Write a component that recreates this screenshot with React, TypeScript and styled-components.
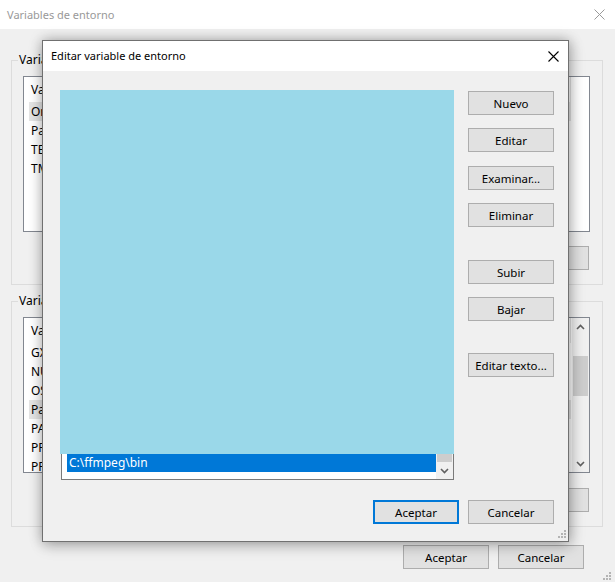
import React from "react";
import styled, { createGlobalStyle } from "styled-components";

const GlobalStyle = createGlobalStyle`
  html, body { margin: 0; padding: 0; }
  body {
    width: 615px;
    height: 582px;
    overflow: hidden;
    background: #f0f0f0;
    font-family: "Noto Sans", "Open Sans", sans-serif;
    font-size: 11.5px;
    color: #000;
  }
  * { box-sizing: border-box; }
`;

const Desktop = styled.div`
  position: relative;
  width: 615px;
  height: 582px;
  overflow: hidden;
`;

const Window = styled.div`
  position: relative;
  display: flex;
  flex-direction: column;
  width: 615px;
  height: 582px;
  background: #f0f0f0;
`;

const TitleBar = styled.div<{ $active?: boolean }>`
  display: flex;
  align-items: center;
  justify-content: space-between;
  flex-shrink: 0;
  height: ${(p) => (p.$active ? 30 : 29)}px;
  background: #fff;
  padding: 0 ${(p) => (p.$active ? 9 : 10)}px 0 ${(p) => (p.$active ? 8 : 7)}px;
  color: ${(p) => (p.$active ? "#000" : "#999")};
  font-size: 11px;
  line-height: 16px;
`;

const WindowBody = styled.div`
  flex: 1;
  display: flex;
  flex-direction: column;
  padding: 23px 12px 0 11px;
`;

const GroupBox = styled.fieldset<{ $mt?: number }>`
  margin: ${(p) => p.$mt ?? 0}px 0 0;
  padding: 8px 12px 14px 11px;
  border: 1px solid #dcdcdc;
  min-width: 0;
`;

const GroupLegend = styled.legend`
  padding: 0 1px;
  margin-left: -5px;
  line-height: 16px;
  font-size: 12px;
`;

const ListView = styled.div`
  display: flex;
  height: 156px;
  background: #fff;
  border: 1px solid #828790;
  overflow: hidden;
`;

const ListMain = styled.div<{ $mr: number }>`
  flex: 1;
  min-width: 0;
  display: flex;
  flex-direction: column;
  padding: 0 ${(p) => p.$mr}px 0 5px;
`;

const ListHeader = styled.div`
  display: flex;
  height: 25px;
  flex-shrink: 0;
`;

const HeaderCell = styled.div<{ $w?: number }>`
  display: flex;
  align-items: center;
  padding-left: 2px;
  ${(p) => (p.$w ? `width: ${p.$w}px;` : "flex: 1;")}
  border-right: 1px solid #e5e5e5;
  white-space: nowrap;
  font-size: 12px;
`;

const ListRow = styled.div<{ $selected?: boolean }>`
  height: 19px;
  line-height: 19px;
  padding-left: 2px;
  white-space: nowrap;
  font-size: 12px;
  background: ${(p) => (p.$selected ? "#e5e5e5" : "transparent")};
  flex-shrink: 0;
`;

const VScroll = styled.div`
  width: 17px;
  flex-shrink: 0;
  display: flex;
  flex-direction: column;
  background: #f0f0f0;
`;

const ScrollArrow = styled.div`
  height: 17px;
  flex-shrink: 0;
  display: flex;
  align-items: center;
  justify-content: center;
`;

const ScrollTrack = styled.div<{ $end?: boolean }>`
  flex: 1;
  display: flex;
  flex-direction: column;
  justify-content: ${(p) => (p.$end ? "flex-end" : "flex-start")};
  padding: 0 1px;
`;

const ScrollThumb = styled.div<{ $mt: number; $h: number }>`
  margin-top: ${(p) => p.$mt}px;
  height: ${(p) => p.$h}px;
  flex-shrink: 0;
  background: #cdcdcd;
`;

const ButtonRow = styled.div<{ $mt: number; $pr?: number }>`
  display: flex;
  justify-content: flex-end;
  gap: 9px;
  margin-top: ${(p) => p.$mt}px;
  padding-right: ${(p) => p.$pr ?? 0}px;
`;

const Button = styled.button<{ $default?: boolean; $mt?: number }>`
  width: 86px;
  height: 24px;
  flex-shrink: 0;
  margin: ${(p) => p.$mt ?? 0}px 0 0;
  padding: 0;
  background: #e1e1e1;
  border: ${(p) => (p.$default ? "2px solid #0078d7" : "1px solid #adadad")};
  font-family: inherit;
  font-size: 11.5px;
  color: #000;
  white-space: nowrap;
`;

const Grip = styled.svg<{ $right: number; $bottom: number }>`
  position: absolute;
  right: ${(p) => p.$right}px;
  bottom: ${(p) => p.$bottom}px;
  width: 8px;
  height: 8px;
`;

const Dialog = styled.div`
  position: absolute;
  left: 42px;
  top: 40px;
  width: 527px;
  height: 502px;
  display: flex;
  flex-direction: column;
  background: #f0f0f0;
  border: 1px solid #707070;
  box-shadow: 0 0 12px rgba(0, 0, 0, 0.28), 2px 4px 14px rgba(0, 0, 0, 0.18);
`;

const DialogBody = styled.div`
  flex: 1;
  display: flex;
  flex-direction: column;
  padding: 19px 14px 0 18px;
`;

const DialogMain = styled.div`
  display: flex;
  align-items: flex-start;
  gap: 14px;
`;

const PathListWrap = styled.div`
  position: relative;
`;

const PathList = styled.div`
  display: flex;
  width: 393px;
  height: 390px;
  background: #fff;
  border: 1px solid #7a7a7a;
`;

const PathItems = styled.div`
  flex: 1;
  min-width: 0;
  display: flex;
  flex-direction: column;
  justify-content: flex-end;
  padding: 0 0 7px 5px;
`;

const PathItem = styled.div<{ $selected?: boolean }>`
  height: 18px;
  line-height: 18px;
  padding-left: 2px;
  font-size: 12px;
  white-space: nowrap;
  background: ${(p) => (p.$selected ? "#0078d7" : "transparent")};
  color: ${(p) => (p.$selected ? "#fff" : "#000")};
`;

const Redaction = styled.div`
  position: absolute;
  left: -1px;
  top: 0;
  width: 394px;
  height: 364px;
  background: #9ad8e9;
`;

const SideButtons = styled.div`
  display: flex;
  flex-direction: column;
  padding-top: 1px;
`;

const CloseIcon = ({ color, width }: { color: string; width: number }) => (
  <svg width="11" height="11" viewBox="0 0 11 11">
    <path d="M0.5 0.5 L10.5 10.5 M10.5 0.5 L0.5 10.5" stroke={color} strokeWidth={width} fill="none" />
  </svg>
);

const Chevron = ({ up }: { up?: boolean }) => (
  <svg width="9" height="6" viewBox="0 0 9 6">
    <path
      d={up ? "M1 5 L4.5 1.5 L8 5" : "M1 1 L4.5 4.5 L8 1"}
      stroke="#606060"
      strokeWidth="1.6"
      fill="none"
    />
  </svg>
);

const GripDots = ({ right, bottom }: { right: number; bottom: number }) => (
  <Grip $right={right} $bottom={bottom} viewBox="0 0 8 8">
    {[
      [6, 0],
      [3, 3],
      [6, 3],
      [0, 6],
      [3, 6],
      [6, 6],
    ].map(([x, y]) => (
      <rect key={`${x}-${y}`} x={x} y={y} width="2" height="2" fill="#b4b4b4" />
    ))}
  </Grip>
);

const userVars = ["OneDrive", "Path", "TEMP", "TMP"];
const systemVars = [
  "GXDLLPATH",
  "NUMBER_OF_PROCESSORS",
  "OS",
  "Path",
  "PATHEXT",
  "PROCESSOR_ARCHITECTURE",
  "PROCESSOR_IDENTIFIER",
];

export default function App() {
  return (
    <>
      <GlobalStyle />
      <Desktop>
        <Window>
          <TitleBar>
            <span>Variables de entorno</span>
            <CloseIcon color="#9a9a9a" width={1} />
          </TitleBar>
          <WindowBody>
            <GroupBox>
              <GroupLegend>Variables de usuario para Usuario</GroupLegend>
              <ListView>
                <ListMain $mr={18}>
                  <ListHeader>
                    <HeaderCell $w={160}>Variable</HeaderCell>
                    <HeaderCell>Valor</HeaderCell>
                  </ListHeader>
                  {userVars.map((v, i) => (
                    <ListRow key={v} $selected={i === 0}>
                      {v}
                    </ListRow>
                  ))}
                </ListMain>
              </ListView>
              <ButtonRow $mt={14} $pr={1}>
                <Button>Nuevo...</Button>
                <Button>Editar...</Button>
                <Button>Eliminar</Button>
              </ButtonRow>
            </GroupBox>
            <GroupBox $mt={8}>
              <GroupLegend>Variables del sistema</GroupLegend>
              <ListView>
                <ListMain $mr={1}>
                  <ListHeader>
                    <HeaderCell $w={160}>Variable</HeaderCell>
                    <HeaderCell>Valor</HeaderCell>
                  </ListHeader>
                  {systemVars.map((v, i) => (
                    <ListRow key={v} $selected={i === 3}>
                      {v}
                    </ListRow>
                  ))}
                </ListMain>
                <VScroll>
                  <ScrollArrow>
                    <Chevron up />
                  </ScrollArrow>
                  <ScrollTrack>
                    <ScrollThumb $mt={21} $h={40} />
                  </ScrollTrack>
                  <ScrollArrow>
                    <Chevron />
                  </ScrollArrow>
                </VScroll>
              </ListView>
              <ButtonRow $mt={15} $pr={1}>
                <Button>Nuevo...</Button>
                <Button>Editar...</Button>
                <Button>Eliminar</Button>
              </ButtonRow>
            </GroupBox>
            <ButtonRow $mt={18} $pr={19}>
              <Button>Aceptar</Button>
              <Button>Cancelar</Button>
            </ButtonRow>
          </WindowBody>
          <GripDots right={4} bottom={2} />
        </Window>

        <Dialog>
          <TitleBar $active>
            <span>Editar variable de entorno</span>
            <CloseIcon color="#000" width={1.1} />
          </TitleBar>
          <DialogBody>
            <DialogMain>
              <PathListWrap>
                <PathList>
                  <PathItems>
                    <PathItem $selected>C:\ffmpeg\bin</PathItem>
                  </PathItems>
                  <VScroll>
                    <ScrollArrow>
                      <Chevron up />
                    </ScrollArrow>
                    <ScrollTrack $end>
                      <ScrollThumb $mt={0} $h={60} />
                    </ScrollTrack>
                    <ScrollArrow>
                      <Chevron />
                    </ScrollArrow>
                  </VScroll>
                </PathList>
                <Redaction />
              </PathListWrap>
              <SideButtons>
                <Button>Nuevo</Button>
                <Button $mt={13}>Editar</Button>
                <Button $mt={14}>Examinar...</Button>
                <Button $mt={13}>Eliminar</Button>
                <Button $mt={33}>Subir</Button>
                <Button $mt={13}>Bajar</Button>
                <Button $mt={32}>Editar texto...</Button>
              </SideButtons>
            </DialogMain>
            <ButtonRow $mt={20}>
              <Button $default>Aceptar</Button>
              <Button>Cancelar</Button>
            </ButtonRow>
          </DialogBody>
          <GripDots right={2} bottom={3} />
        </Dialog>
      </Desktop>
    </>
  );
}
